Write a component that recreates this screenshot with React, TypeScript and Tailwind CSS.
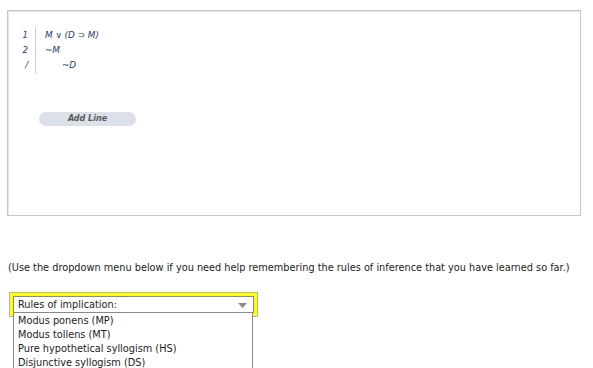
const font = "font-['DejaVu_Sans',Verdana,sans-serif]";

const proofLines = [
  { num: "1", text: "M ∨ (D ⊃ M)", indent: false },
  { num: "2", text: "~M", indent: false },
  { num: "/", text: "~D", indent: true },
];

const rules = [
  "Modus ponens (MP)",
  "Modus tollens (MT)",
  "Pure hypothetical syllogism (HS)",
  "Disjunctive syllogism (DS)",
];

export default function App() {
  return (
    <div className={`w-[593px] h-[368px] overflow-hidden bg-white ${font}`}>
      {/* Proof box */}
      <div className="ml-[7px] mt-[10px] w-[574px] h-[206px] border border-[#c6c6c6] shadow-[inset_1px_1px_0_#e6e6e6]">
        <div className="flex mt-[16px] ml-[9px]">
          <div className="flex flex-col w-[19px] pr-[7px] items-end border-r border-[#cfcfcf] text-[8.5px] italic text-[#23406e] leading-[15px] pt-px pb-px">
            {proofLines.map((l) => (
              <span key={l.num}>{l.num}</span>
            ))}
          </div>
          <div className="flex flex-col pl-[9px] text-[8.8px] italic text-[#23406e] leading-[15px] pt-px">
            {proofLines.map((l) => (
              <span key={l.num} className={l.indent ? "pl-[17px]" : ""}>
                {l.text}
              </span>
            ))}
          </div>
        </div>
        <button className="mt-[38px] ml-[31px] w-[97px] h-[14px] rounded-full bg-[#dce1e9] text-[8px] font-bold italic text-[#5a5a5a] leading-[14px] flex items-center justify-center">
          Add Line
        </button>
      </div>

      <p className="mt-[46px] ml-[8px] text-[9.75px] text-[#222] leading-[12px] whitespace-nowrap">
        (Use the dropdown menu below if you need help remembering the rules of inference that you have learned so far.)
      </p>

      {/* Dropdown */}
      <div className="relative mt-[18px] ml-[9px] w-[249px] h-[25px] border border-[#b4b4b4] bg-[#ffff00] p-[3px]">
        <div className="flex items-center justify-between h-[17px] bg-white border border-[#8a8a8a] pl-[4px] pr-[6px] pt-px text-[9.75px] text-[#222]">
          <span>Rules of implication:</span>
          <svg width="9" height="5" viewBox="0 0 9 5">
            <path d="M0 0H9L4.5 5Z" fill="#8a8a8a" />
          </svg>
        </div>
        <div className="absolute left-[3px] top-[20px] w-[240px] bg-white border-l border-r border-[#8a8a8a] pl-[4px] pt-px text-[9.75px] text-[#222] leading-[14px]">
          {rules.map((r) => (
            <div key={r}>{r}</div>
          ))}
        </div>
      </div>
    </div>
  );
}
